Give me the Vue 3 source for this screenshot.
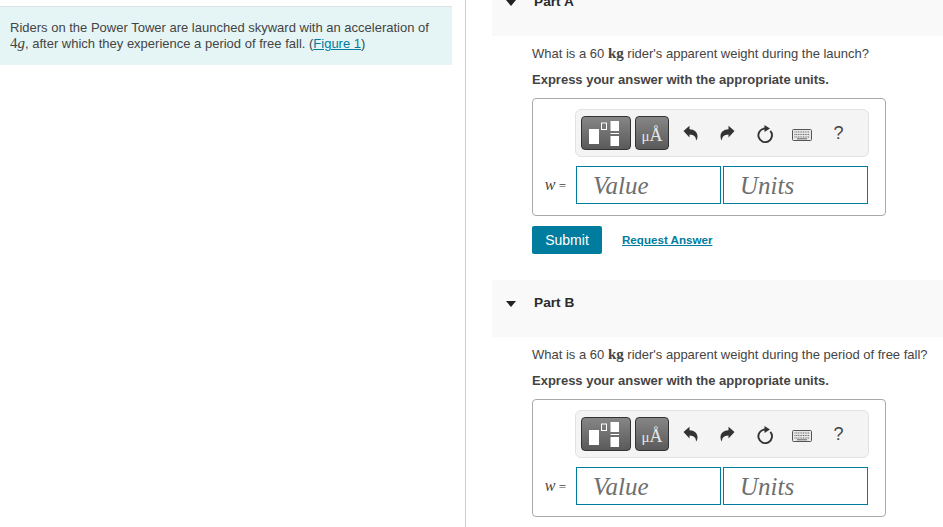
<script setup>
const parts = [
  { id: 'A', question: "rider's apparent weight during the launch?", showActions: true },
  { id: 'B', question: "rider's apparent weight during the period of free fall?", showActions: false }
]
</script>

<template>
  <div class="page">
    <aside class="left">
      <div class="intro">
        Riders on the Power Tower are launched skyward with an acceleration of<br />
        <span class="math">4<i>g</i></span>, after which they experience a period of free fall.
        (<a class="link" href="#">Figure 1</a>)
      </div>
    </aside>

    <main class="right">
      <section v-for="part in parts" :key="part.id" class="part">
        <header class="part-head">
          <svg class="caret" width="10" height="6" viewBox="0 0 10 6"><path d="M0 0h10L5 6z" fill="#222" /></svg>
          <h2>Part {{ part.id }}</h2>
        </header>
        <div class="part-body">
          <p class="question">What is a 60 <span class="unit">kg</span> {{ part.question }}</p>
          <p class="express">Express your answer with the appropriate units.</p>

          <div class="answer-box">
            <div class="toolbar">
              <button class="tool-btn templates">
                <svg width="48" height="32" viewBox="0 0 48 32">
                  <rect x="7" y="12" width="10" height="15" fill="#fff" />
                  <rect x="19.500" y="6" width="5" height="6.500" fill="none" stroke="#fff" />
                  <rect x="28.500" y="4" width="8.500" height="10" fill="#fff" />
                  <rect x="28.500" y="16" width="8.500" height="1" fill="#fff" />
                  <rect x="28.500" y="19" width="8.500" height="10" fill="#fff" />
                </svg>
              </button>
              <button class="tool-btn symbols"><span class="mu">μ</span>Å</button>
              <div class="tool-icons">
                <span class="cell">
                  <svg width="15" height="16" viewBox="0 0 15 16"><path d="M.5 6 6.500 .8v3.400c4.800 .2 8 2.800 8 7 0 1.700-.5 3.300-1.500 4.300.3-3.600-2-6-6.500-6.100v3z" fill="#333" /></svg>
                </span>
                <span class="cell">
                  <svg width="15" height="16" viewBox="0 0 15 16"><path d="M14.500 6 8.500 .8v3.400c-4.800 .2-8 2.800-8 7 0 1.700 .5 3.300 1.500 4.300-.3-3.600 2-6 6.500-6.100v3z" fill="#333" /></svg>
                </span>
                <span class="cell">
                  <svg width="18" height="19" viewBox="0 0 18 19"><path d="M9 4.500A6.800 6.800 0 1 0 14.300 6.800" fill="none" stroke="#333" stroke-width="1.900" /><path d="M8.500 1 14 4.500 8.500 8z" fill="#333" /></svg>
                </span>
                <span class="cell kb">
                  <svg width="20" height="12" viewBox="0 0 20 12">
                    <rect x=".5" y=".5" width="19" height="11" rx="1" fill="#e8e8e8" stroke="#555" />
                    <path d="M2.500 3h15M2.500 5.500h15M2.500 8h15" stroke="#666" stroke-width="1.200" stroke-dasharray="1 .7" />
                    <path d="M5 9.800h10" stroke="#666" />
                  </svg>
                </span>
                <span class="cell help">?</span>
              </div>
            </div>
            <div class="input-row">
              <span class="var"><i>w</i> =</span>
              <div class="field">Value</div>
              <div class="field">Units</div>
            </div>
          </div>

          <div v-if="part.showActions" class="actions">
            <button class="submit">Submit</button>
            <a class="request" href="#">Request Answer</a>
          </div>
        </div>
      </section>
    </main>
  </div>
</template>

<style scoped>
.page {
  display: flex;
  width: 943px;
  height: 527px;
  overflow: hidden;
  background: #fff;
  font-family: "Liberation Sans", Arial, sans-serif;
  color: #444;
}

.left {
  width: 465px;
  flex-shrink: 0;
  border-right: 1px solid #c9cfd6;
  padding-top: 6px;
}

.intro {
  width: 432px;
  padding: 13px 10px;
  background: #e5f5f6;
  border-top: 1px solid #dde3e6;
  font-size: 13px;
  line-height: 16px;
}

.math {
  font-family: "Liberation Serif", serif;
  font-size: 15px;
  line-height: 1;
}

.link {
  color: #007c9e;
  text-decoration: underline;
}

.right {
  flex: 1;
  min-width: 0;
  padding-left: 26px;
  margin-top: -21px;
}

.part-head {
  display: flex;
  align-items: flex-start;
  gap: 18px;
  height: 57px;
  padding: 15px 0 0 14px;
  box-sizing: border-box;
  background: #f9f9f9;
}

.caret {
  margin-top: 6px;
}

.part-head h2 {
  margin: 0;
  font-size: 13.700px;
  line-height: 16px;
  font-weight: bold;
  color: #2b2b2b;
}

.part-body {
  padding: 9px 0 26px 40px;
}

.question {
  margin: 0;
  font-size: 13px;
  line-height: 18px;
  white-space: nowrap;
}

.unit {
  font-family: "Liberation Serif", serif;
  font-weight: bold;
  font-size: 15px;
  line-height: 1;
}

.express {
  margin: 8px 0 0;
  font-size: 13px;
  line-height: 18px;
  font-weight: bold;
}

.answer-box {
  width: 354px;
  height: 118px;
  margin-top: 9px;
  box-sizing: border-box;
  border: 1px solid #aaa;
  border-radius: 4px;
  padding: 10px 16px 0 0;
  display: flex;
  flex-direction: column;
  align-items: flex-end;
}

.toolbar {
  width: 294px;
  height: 48px;
  box-sizing: border-box;
  display: flex;
  align-items: center;
  padding-left: 5px;
  background: #f4f4f4;
  border: 1px solid #e2e2e2;
  border-radius: 6px;
}

.tool-btn {
  height: 34px;
  padding: 0;
  display: flex;
  align-items: center;
  justify-content: center;
  border: 1px solid #333;
  border-radius: 4px;
  background: linear-gradient(#868686, #5a5a5a);
  color: #e6e6e6;
}

.templates {
  width: 50px;
}

.symbols {
  width: 34px;
  margin-left: 4px;
  padding-top: 3px;
  font-family: "Liberation Serif", serif;
  font-size: 18px;
  line-height: 1;
}

.mu {
  font-size: 15px;
  align-self: center;
  margin-top: 3px;
}

.tool-icons {
  display: flex;
  align-items: center;
  margin-left: 3px;
}

.cell {
  width: 37px;
  display: flex;
  align-items: center;
  justify-content: center;
}

.kb {
  padding-top: 4px;
}

.help {
  font-size: 18px;
  line-height: 20px;
  color: #444;
}

.input-row {
  display: flex;
  align-items: center;
  gap: 2px;
  margin-top: 9px;
  margin-right: 1px;
}

.var {
  font-family: "Liberation Serif", serif;
  font-size: 13px;
  margin-right: 8px;
}

.var i {
  font-size: 16px;
}

.field {
  width: 145px;
  height: 38px;
  box-sizing: border-box;
  border: 1px solid #007c9e;
  padding-left: 16px;
  font-family: "Liberation Serif", serif;
  font-style: italic;
  font-size: 25px;
  line-height: 37px;
  color: #6f6f6f;
}

.actions {
  display: flex;
  align-items: center;
  gap: 20px;
  margin-top: 10px;
}

.submit {
  width: 70px;
  height: 28px;
  padding: 0;
  border: none;
  border-radius: 2px;
  background: #007c9e;
  color: #fff;
  font-family: inherit;
  font-size: 14px;
}

.request {
  margin-bottom: 2px;
  color: #007c9e;
  font-size: 11.600px;
  font-weight: bold;
  text-decoration: underline;
}
</style>
